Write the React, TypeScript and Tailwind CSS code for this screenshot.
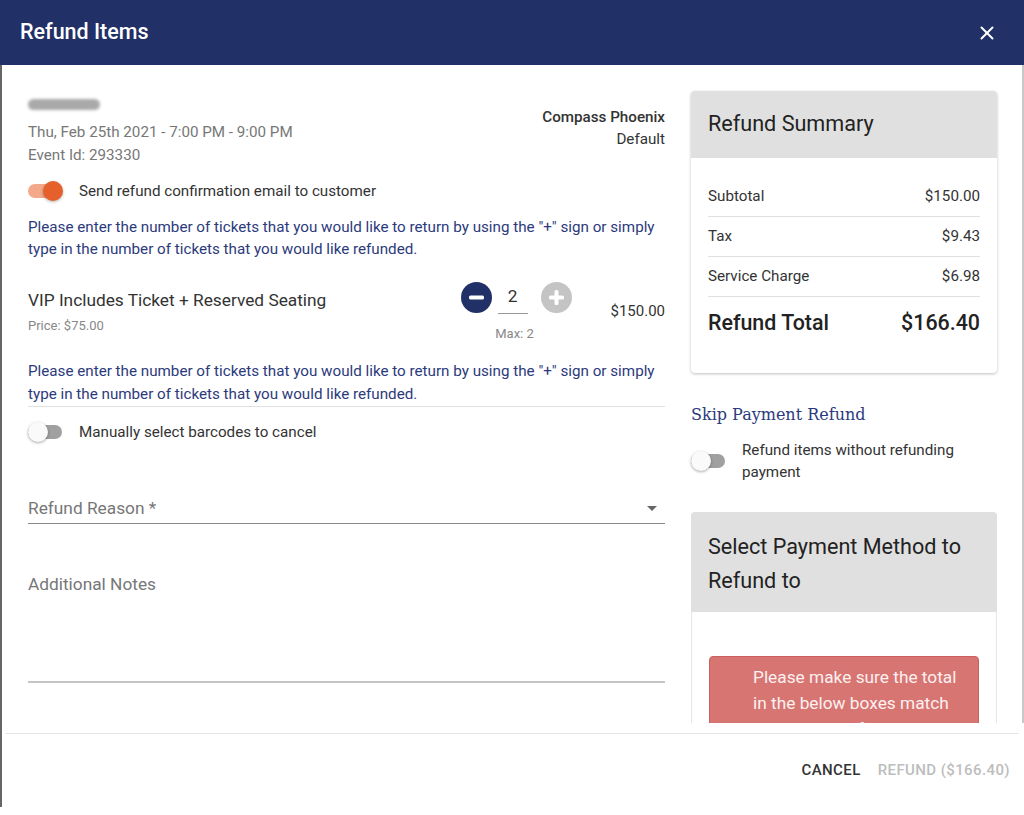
import { X } from "lucide-react";

function Toggle({ on }: { on: boolean }) {
  return (
    <div className="relative w-[36px] h-[20px] shrink-0 flex items-center">
      <div className={on ? "w-[34px] h-[14px] rounded-full bg-[#f3a88a]" : "w-[34px] h-[14px] rounded-full bg-[#a0a0a0]"} />
      <div
        className={
          on
            ? "absolute left-[15px] top-0 w-[20px] h-[20px] rounded-full bg-[#e5602b] shadow-[0_1px_3px_rgba(0,0,0,0.3)]"
            : "absolute left-0 top-0 w-[20px] h-[20px] rounded-full bg-[#fafafa] shadow-[0_1px_3px_rgba(0,0,0,0.35)]"
        }
      />
    </div>
  );
}

function Row({ label, value, last }: { label: string; value: string; last?: boolean }) {
  return (
    <div className={last ? "h-[40px] flex items-center justify-between text-[15.2px] text-[#333]" : "h-[40px] flex items-center justify-between text-[15.2px] text-[#333] border-b border-[#e0e0e0]"}>
      <span>{label}</span>
      <span>{value}</span>
    </div>
  );
}

const helpText =
  'Please enter the number of tickets that you would like to return by using the "+" sign or simply type in the number of tickets that you would like refunded.';

export default function App() {
  return (
    <div className="w-[1024px] h-[815px] bg-white overflow-hidden font-['Roboto',sans-serif]">
      <header className="h-[65px] bg-[#213066] flex items-center justify-between pl-5 pr-[26px]">
        <h1 className="text-white text-[21.5px] font-medium">Refund Items</h1>
        <X size={22} strokeWidth={2.2} className="text-white" />
      </header>

      <div className="border-l-2 border-[#666] h-[742px]">
        <div className="h-[658px] overflow-hidden flex pl-[26px] border-r-2 border-[#c8c8c8] w-[1022px]">
          {/* left column */}
          <div className="w-[637px] shrink-0">
            <div className="flex justify-between pt-[34px]">
              <div>
                <div className="w-[72px] h-[11px] rounded-full bg-[#a9a9a9] blur-[1.5px]" />
                <div className="mt-[11px] text-[15.2px] leading-[23px] text-[#777]">
                  <p>Thu, Feb 25th 2021 - 7:00 PM - 9:00 PM</p>
                  <p>Event Id: 293330</p>
                </div>
              </div>
              <div className="text-right text-[15.2px] leading-[22px] text-[#333] pt-[7px]">
                <p className="font-medium">Compass Phoenix</p>
                <p>Default</p>
              </div>
            </div>

            <div className="flex items-center gap-[15px] mt-[14px]">
              <Toggle on />
              <span className="text-[15.2px] leading-[20px] text-[#333]">Send refund confirmation email to customer</span>
            </div>

            <p className="mt-[15px] text-[15.2px] leading-[22px] text-[#2c3a7c]">{helpText}</p>

            <div className="flex items-start mt-[20px]">
              <div className="flex-1">
                <p className="text-[17.3px] text-[#333] leading-[22px] mt-[9px]">VIP Includes Ticket + Reserved Seating</p>
                <p className="text-[13px] leading-[16px] text-[#888] mt-[7px]">Price: $75.00</p>
              </div>
              <div className="flex flex-col items-center w-[110px]">
                <div className="flex items-center">
                  <svg width="31" height="31" viewBox="0 0 31 31">
                    <circle cx="15.5" cy="15.5" r="15.5" fill="#213066" />
                    <rect x="8" y="13.5" width="15" height="4" rx="1.5" fill="#fff" />
                  </svg>
                  <div className="ml-[6px] mr-[13px] w-[30px] text-center text-[17.3px] leading-[22px] text-[#333] border-b border-[#999] pb-[6px] mt-[5px]">2</div>
                  <svg width="31" height="31" viewBox="0 0 31 31">
                    <circle cx="15.5" cy="15.5" r="15.5" fill="#c4c4c4" />
                    <rect x="8" y="13.5" width="15" height="4" rx="1.5" fill="#fff" />
                    <rect x="13.5" y="8" width="4" height="15" rx="1.5" fill="#fff" />
                  </svg>
                </div>
                <p className="text-[13px] leading-[16px] text-[#888] mt-[12px] ml-[-3px]">Max: 2</p>
              </div>
              <p className="w-[94px] text-right text-[15px] leading-[20px] text-[#333] mt-[21px]">$150.00</p>
            </div>

            <p className="mt-[18px] text-[15.2px] leading-[23px] text-[#2c3a7c] border-b border-[#e0e0e0]">{helpText}</p>

            <div className="flex items-center gap-[15px] mt-[15px]">
              <Toggle on={false} />
              <span className="text-[15.2px] leading-[20px] text-[#333]">Manually select barcodes to cancel</span>
            </div>

            <div className="mt-[54px] flex items-center justify-between border-b border-[#8a8a8a] pb-[3px]">
              <span className="text-[17.3px] leading-[24px] text-[#777]">Refund Reason *</span>
              <svg width="24" height="24" viewBox="0 0 24 24" className="mr-[1px]">
                <path d="M7 10l5 5 5-5z" fill="#666" />
              </svg>
            </div>

            <div className="mt-[48px] h-[111px] border-b-2 border-[#c4c4c4]">
              <span className="text-[17.3px] leading-[24px] text-[#777]">Additional Notes</span>
            </div>
          </div>

          {/* right column */}
          <div className="w-[306px] shrink-0 ml-[26px] pt-[26px]">
            <div className="rounded-[4px] bg-white shadow-[0_1px_3px_rgba(0,0,0,0.25)] overflow-hidden">
              <div className="h-[67px] bg-[#e0e0e0] flex items-center px-[17px]">
                <h2 className="text-[21.6px] text-[#222]">Refund Summary</h2>
              </div>
              <div className="px-[17px] pt-[19px] pb-[24px]">
                <Row label="Subtotal" value="$150.00" />
                <Row label="Tax" value="$9.43" />
                <Row label="Service Charge" value="$6.98" />
                <div className="h-[52px] flex items-center justify-between text-[21.4px] font-medium text-[#222]">
                  <span>Refund Total</span>
                  <span>$166.40</span>
                </div>
              </div>
            </div>

            <h3 className="mt-[31px] text-[16px] leading-[22px] text-[#2c3a7c] font-['DejaVu_Serif',serif]">Skip Payment Refund</h3>
            <div className="flex items-center gap-[15px] mt-[13px]">
              <Toggle on={false} />
              <span className="text-[15.2px] leading-[22px] text-[#333] w-[235px]">Refund items without refunding payment</span>
            </div>

            <div className="mt-[29px] rounded-t-[4px] overflow-hidden">
              <div className="bg-[#e0e0e0] px-[17px] pt-[18px] pb-[14px]">
                <h2 className="text-[21.6px] leading-[34px] text-[#222]">
                  Select Payment Method to
                  <br />
                  Refund to
                </h2>
              </div>
              <div className="border-x border-[#e6e6e6] px-[17px] pt-[44px] h-[200px]">
                <div className="rounded-[4px] bg-[#d77573] border border-[#c9605e] pl-[43px] pr-3 pt-[7px] pb-3 text-[17.3px] leading-[26px] text-[#fdf0ef]">
                  Please make sure the total in the below boxes match the dispute refund total.
                </div>
              </div>
            </div>
          </div>
        </div>

        <div className="mt-[10px] ml-[3px] mr-[5px] border-t border-[#e6e6e6] h-[70px] flex items-center justify-end gap-[17px] pr-[9px] pt-[3px]">
          <span className="text-[15px] font-medium tracking-[0.4px] text-[#333]">CANCEL</span>
          <span className="text-[15px] font-medium tracking-[0.4px] text-[#bdbdbd]">REFUND ($166.40)</span>
        </div>
      </div>
    </div>
  );
}
